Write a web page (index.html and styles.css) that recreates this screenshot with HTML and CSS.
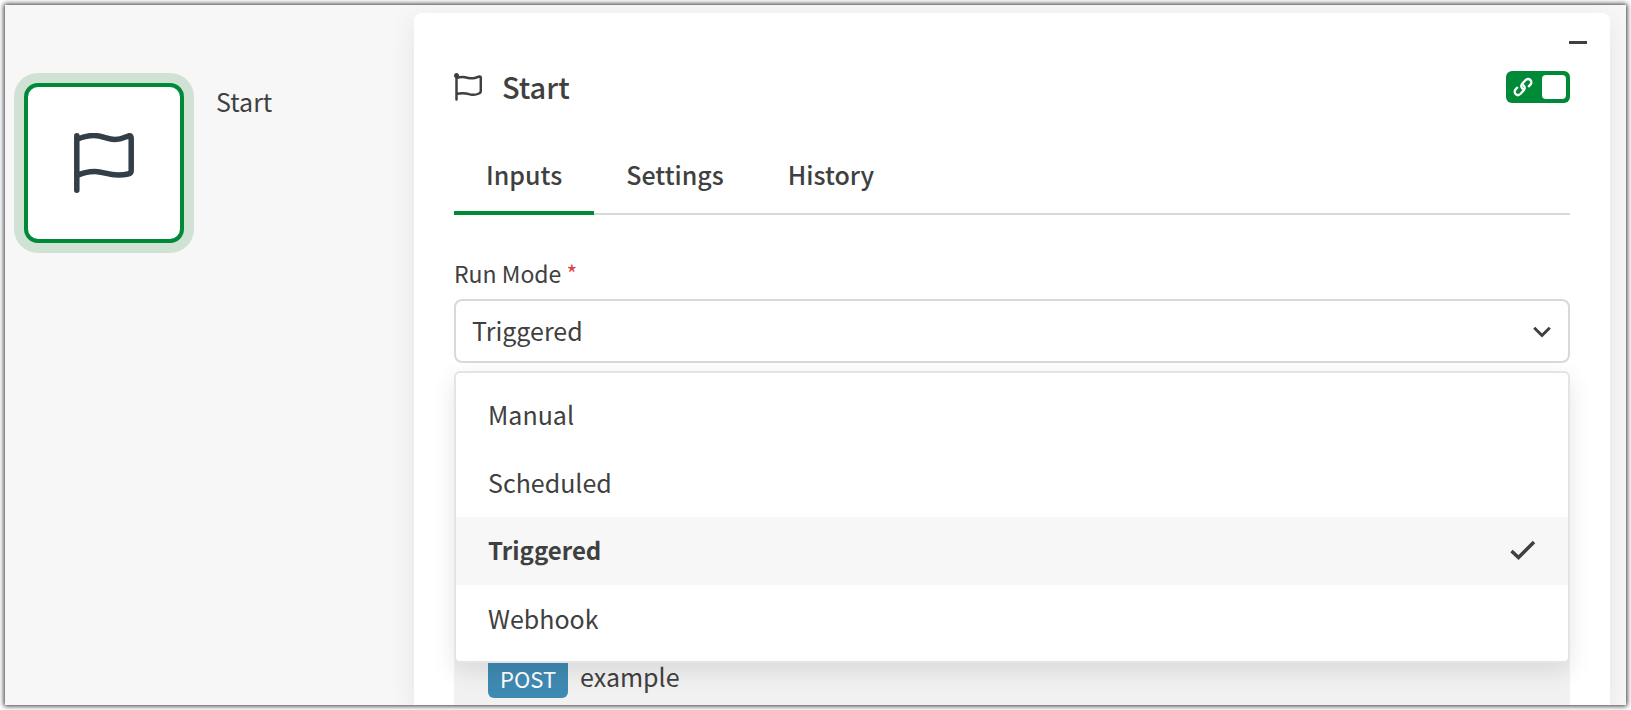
FILE: index.html
```html
<!DOCTYPE html>
<html lang="en">
<head>
  <meta charset="UTF-8">
  <meta name="viewport" content="width=device-width, initial-scale=1.0">
  <title>Start</title>
  <link rel="stylesheet" href="styles.css">
</head>
<body>

  <div class="window">
    <main class="canvas">
      <button class="node" type="button" aria-labelledby="nodeLabel">
        <svg class="node-icon" viewBox="0 0 60 60" aria-hidden="true">
          <path d="M2.8 2.8V57.2M2.8 6.5C8 4 13 2.5 20 2.5C29 2.5 33 6.5 41 6.5C48 6.5 51 4 55 2.8Q57.2 2.4 57.2 5V37.5Q57.2 40.5 54 41C51 41.8 48 42 44 42C34 42 29 38.5 21 38.5C13 38.5 8 40 2.8 42.8"/>
        </svg>
      </button>
      <span class="node-label" id="nodeLabel">Start</span>
    </main>

    <section class="panel">
      <button class="minimize" type="button" aria-label="Minimize"></button>

      <header class="panel-header">
        <svg class="title-icon" viewBox="0 0 28 28" aria-hidden="true">
          <circle cx="2.5" cy="2.5" r="2.5"/>
          <path d="M2.5 2.5V26.5M2.5 5.2C5 4 8 3.7 11 4.2C14 4.8 16 5.6 19 5.3C22 5 23.5 3.8 25.5 3.5Q26.8 3.4 26.8 5V18Q26.8 19.6 25 20.5C22 22 19 22.2 16 21.4C12 20.2 8 19.2 2.5 21.2"/>
        </svg>
        <h1>Start</h1>
        <label class="switch">
          <input type="checkbox" aria-label="Linked" checked>
          <svg viewBox="0 0 20 20" aria-hidden="true">
            <path d="M10.4 12.2C8.2 11.2 7.6 8.4 9.2 6.7L12.4 3.2C14 1.6 16.1 1.7 17.3 2.9C18.7 4.2 18.7 6.2 17.4 7.6L15.2 10"/>
            <path d="M9.6 7.8C11.8 8.8 12.4 11.6 10.8 13.3L7.6 16.8C6 18.4 3.9 18.3 2.7 17.1C1.3 15.8 1.3 13.8 2.6 12.4L4.8 10"/>
          </svg>
        </label>
      </header>

      <nav class="tabs">
        <button class="tab active" type="button">Inputs</button>
        <button class="tab" type="button">Settings</button>
        <button class="tab" type="button">History</button>
      </nav>

      <label class="field-label" for="runMode">Run Mode <span class="required">*</span></label>
      <div class="dropdown">
        <select id="runMode">
          <option>Manual</option>
          <option>Scheduled</option>
          <option selected>Triggered</option>
          <option>Webhook</option>
        </select>
        <svg class="chevron" viewBox="0 0 18 12" aria-hidden="true">
          <path d="M1.2 1.8L9 9.5L16.8 1.8"/>
        </svg>

        <ul class="menu" role="listbox" aria-label="Run Mode">
          <li role="option">Manual</li>
          <li role="option">Scheduled</li>
          <li class="selected" role="option" aria-selected="true">
            Triggered
            <svg class="check" viewBox="0 0 26 20" aria-hidden="true">
              <path d="M1.5 11L8.5 17.5L24 2"/>
            </svg>
          </li>
          <li role="option">Webhook</li>
        </ul>
      </div>

      <div class="endpoint">
        <span class="method">POST</span>
        <span>example</span>
      </div>
    </section>
  </div>

</body>
</html>
```

FILE: styles.css
```css
* {
  box-sizing: border-box;
}

body {
  margin: 0;
  padding: 5px;
  background-color: #fff;
  color: #404040;
  font-family: "Noto Sans CJK SC", "Noto Sans", sans-serif;
  font-size: 25px;
  line-height: 36px;
}

button,
select {
  font: inherit;
  color: inherit;
  cursor: pointer;
}

svg {
  display: block;
  fill: none;
  stroke: currentColor;
}

.window {
  display: flex;
  height: calc(100vh - 10px);
  padding: 8px 16px 0 0;
  overflow: hidden;
  background-color: #f7f7f7;
  box-shadow: 0 0 5px 1px #333;
}

/* canvas */
.canvas {
  display: flex;
  flex: 0 0 409px;
  align-items: flex-start;
  gap: 32px;
  padding: 70px 0 0 19px;
}

.node {
  display: flex;
  justify-content: center;
  align-items: center;
  width: 160px;
  height: 160px;
  padding: 0;
  color: #323e48;
  background-color: #fff;
  border: 4px solid #008936;
  border-radius: 14px;
  box-shadow: 0 0 0 10px #cfe2d4;
}

.node-icon {
  width: 60px;
  height: 60px;
  stroke-width: 5.5;
  stroke-linecap: round;
}

/* panel */
.panel {
  position: relative;
  flex: 1;
  padding: 52px 40px 0;
  background-color: #fff;
  border-radius: 8px 8px 0 0;
  box-shadow: 0 8px 28px rgba(0, 0, 0, 0.08);
}

.minimize {
  position: absolute;
  top: 17px;
  right: 20px;
  width: 24px;
  height: 24px;
  padding: 0;
  background: none;
  border: none;
}

.minimize::before {
  content: "";
  display: block;
  width: 18px;
  height: 3px;
  margin: 0 auto;
  background-color: #404040;
}

.panel-header {
  display: flex;
  align-items: center;
  height: 44px;
}

.title-icon {
  width: 28px;
  height: 28px;
  stroke-width: 2.5;
  stroke-linecap: round;
}

.title-icon circle {
  fill: currentColor;
  stroke: none;
}

h1 {
  margin: 0 auto 0 20px;
  padding-bottom: 2px;
  font-size: 29px;
  font-weight: 500;
}

.switch {
  position: relative;
  display: flex;
  align-items: center;
  width: 64px;
  height: 32px;
  padding-left: 7px;
  color: #fff;
}

.switch input {
  position: absolute;
  inset: 0;
  margin: 0;
  appearance: none;
  background-color: #008936;
  border-radius: 6px;
  cursor: pointer;
}

.switch input::before {
  content: "";
  position: absolute;
  top: 4px;
  right: 4px;
  width: 24px;
  height: 24px;
  background-color: #fff;
  border-radius: 4px;
}

.switch svg {
  position: relative;
  width: 20px;
  height: 20px;
  stroke-width: 2.3;
  pointer-events: none;
}

.tabs {
  display: flex;
  height: 80px;
  margin-top: 26px;
  box-shadow: inset 0 -2px #d9d9d9;
}

.tab {
  padding: 2px 32px 0;
  font-weight: 500;
  background: none;
  border: none;
  border-bottom: 4px solid transparent;
}

.tab.active {
  border-bottom-color: #008936;
}

.field-label {
  display: block;
  margin: 40px 0 8px;
  font-size: 23px;
}

.required {
  color: #dc423f;
}

.dropdown {
  position: relative;
}

.dropdown select {
  display: block;
  width: 100%;
  height: 64px;
  padding: 0 16px 2px;
  appearance: none;
  background-color: #fff;
  border: 2px solid #d9d9d9;
  border-radius: 8px;
}

.chevron {
  position: absolute;
  top: 27px;
  right: 19px;
  width: 18px;
  height: 12px;
  stroke-width: 3;
  pointer-events: none;
}

.menu {
  position: absolute;
  top: 72px;
  left: 0;
  right: 0;
  margin: 0;
  padding: 8px 0;
  list-style: none;
  background-color: #fff;
  border: 2px solid #e4e4e4;
  border-radius: 6px;
  box-shadow: 0 8px 24px rgba(0, 0, 0, 0.1);
}

.menu li {
  display: flex;
  justify-content: space-between;
  align-items: center;
  height: 68px;
  padding: 0 32px 2px;
}

.menu .selected {
  font-size: 24px;
  font-weight: 700;
  background-color: #f7f7f7;
}

.check {
  width: 26px;
  height: 20px;
  stroke-width: 3.5;
}

/* request row, runs on below the open menu */
.endpoint {
  display: flex;
  align-items: flex-start;
  gap: 12px;
  min-height: 120px;
  margin-top: 279px;
  padding: 16px 34px;
  background-color: #f1f1f1;
}

.method {
  padding: 2px 12px;
  font-size: 22px;
  color: #fff;
  background-color: #3f8ab3;
  border-radius: 6px;
}
```
